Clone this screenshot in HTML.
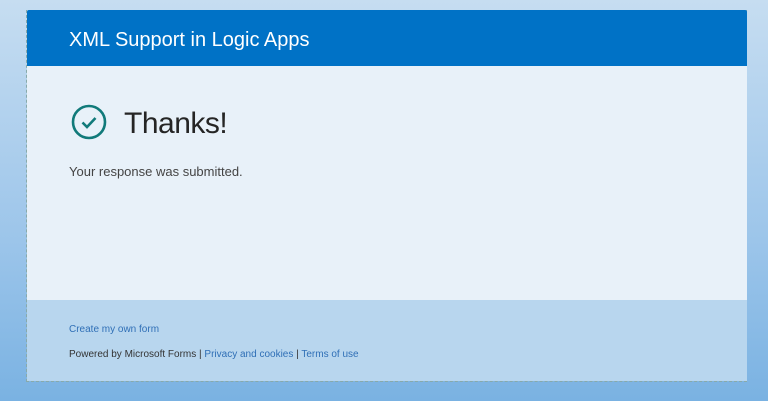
<!DOCTYPE html>
<html><head><style>
html,body{margin:0;padding:0;}
body{width:768px;height:401px;overflow:hidden;background:linear-gradient(#c6ddf1,#9cc5ea 60%,#7ab2e2);font-family:"Liberation Sans",sans-serif;position:relative;}
.card{position:absolute;left:26px;top:10px;width:719px;height:371px;border:1px dashed #8aa;border-top:none;}
.hdr{position:absolute;left:0;top:0;width:720px;height:56px;background:#0072c6;border-radius:2px 2px 0 0;}
.hdr span{position:absolute;left:42px;top:19px;color:#fff;font-size:20px;}
.body{position:absolute;left:0;top:56px;width:720px;height:234px;background:#e8f1f9;}
.foot{position:absolute;left:0;top:290px;width:720px;height:81px;background:#b8d6ee;}
.thanks{position:absolute;left:97px;top:97px;font-size:30px;letter-spacing:-0.5px;color:#252525;}
.resp{position:absolute;left:42px;top:154px;font-size:13px;color:#444;}
.f1{position:absolute;left:42px;top:314px;font-size:10px;color:#2f6fb6;}
.f2{position:absolute;left:42px;top:339px;font-size:10px;color:#333;}
.f2 a{color:#2f6fb6;text-decoration:none;}
</style></head><body>
<div class="card">
<div class="hdr"><span>XML Support in Logic Apps</span></div>
<div class="body"></div>
<div class="foot"></div>
<svg style="position:absolute;left:44px;top:94px" width="36" height="36" viewBox="0 0 36 36"><circle cx="18" cy="18" r="16" fill="none" stroke="#117a7a" stroke-width="2.6"/><path d="M11.5 18.5 L16 23 L24.5 14" fill="none" stroke="#117a7a" stroke-width="2.6"/></svg>
<div class="thanks">Thanks!</div>
<div class="resp">Your response was submitted.</div>
<div class="f1">Create my own form</div>
<div class="f2">Powered by Microsoft Forms | <a>Privacy and cookies</a> | <a>Terms of use</a></div>
</div>
</body></html>
